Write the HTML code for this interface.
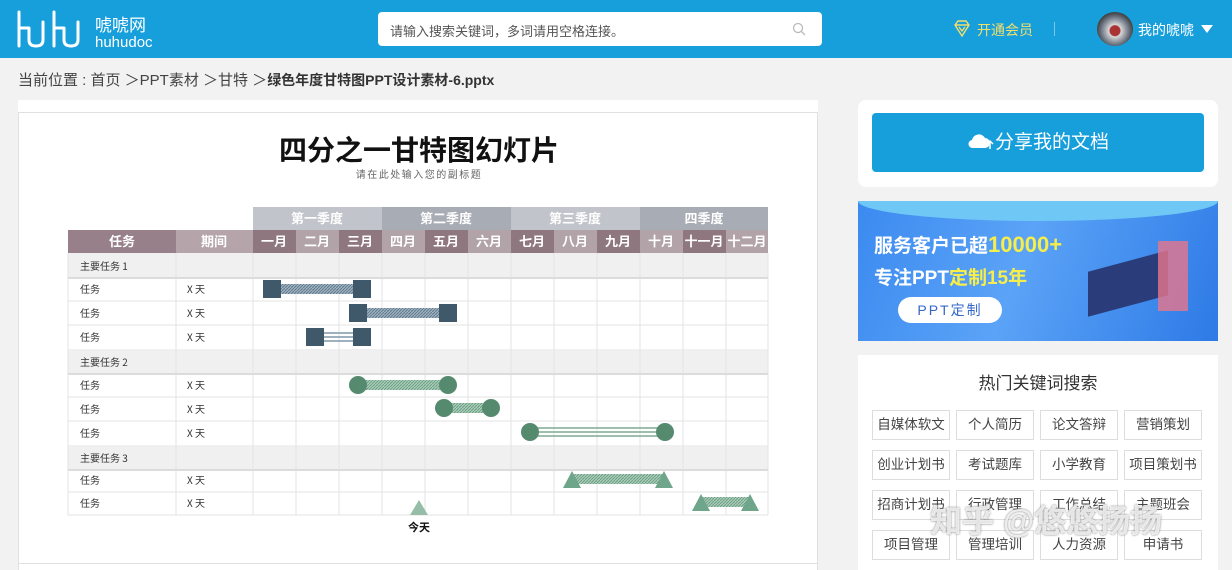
<!DOCTYPE html>
<html><head><meta charset="utf-8">
<style>
*{margin:0;padding:0;box-sizing:border-box}
body{width:1232px;height:570px;overflow:hidden;background:#f2f2f2;font-family:"Liberation Sans","Noto Sans CJK SC",sans-serif;position:relative}
.hdr{position:absolute;left:0;top:0;width:1232px;height:58px;background:#179fdc}
.abs{position:absolute}
.search{left:378px;top:12px;width:444px;height:34px;background:#fff;border-radius:4px;font-size:13px;color:#555;padding:9px 0 0 12px}
.crumb{left:18px;top:69px;font-size:15px;color:#444;white-space:nowrap}
.panel{background:#fff}
.btn{left:872px;top:113px;width:332px;height:59px;background:#179fdc;border-radius:4px;color:#fff;font-size:19px;text-align:center;line-height:59px}
.tag{position:absolute;width:78px;height:30px;border:1px solid #ddd;font-size:13.5px;color:#444;text-align:center;line-height:28px;background:#fff}
</style></head><body>
<div class="hdr"></div>
<svg class="abs" style="left:0;top:0" width="170" height="58">
<g fill="none" stroke="#fff" stroke-width="3" stroke-linecap="round" stroke-linejoin="round">
<path d="M19 12V46M19 28H29V40Q29 46 36 46Q43 46 43 40V22"/>
<path d="M54 12V46M54 28H64V40Q64 46 71 46Q78 46 78 40V22"/>
</g>
<text x="95" y="31" fill="#fff" font-size="17" font-family="Noto Sans CJK SC,sans-serif">唬唬网</text>
<text x="95" y="47" fill="#fff" font-size="15" font-family="Liberation Sans,sans-serif">huhudoc</text>
</svg>
<div class="abs search">请输入搜索关键词，多词请用空格连接。</div>
<svg class="abs" style="left:792px;top:22px" width="14" height="14"><circle cx="6" cy="6" r="4.5" fill="none" stroke="#bbb" stroke-width="1.3"/><path d="M9.5 9.5L13 13" stroke="#bbb" stroke-width="1.3"/></svg>
<svg class="abs" style="left:952px;top:20px" width="20" height="18"><path d="M3 5L6 1H14L17 5L10 16Z M3 5H17 M7 7L10 11L13 7" fill="none" stroke="#f3df6a" stroke-width="1.4"/></svg>
<div class="abs" style="left:977px;top:20px;font-size:14px;color:#f3df6a">开通会员</div>
<div class="abs" style="left:1054px;top:22px;width:1px;height:14px;background:#7cc6ea"></div>
<div class="abs" style="left:1097px;top:12px;width:36px;height:34px;border-radius:50%;background:radial-gradient(circle at 50% 55%,#a33 0 5px,#d8d8d8 6px,#6a7380 14px,#444 18px)"></div>
<div class="abs" style="left:1138px;top:20px;font-size:14px;color:#fff">我的唬唬</div>
<svg class="abs" style="left:1201px;top:25px" width="12" height="9"><path d="M0 0H12L6 8Z" fill="#fff"/></svg>

<div class="abs crumb">当前位置 : 首页 ＞PPT素材 ＞甘特 ＞<b style="font-size:14px;color:#333">绿色年度甘特图PPT设计素材-6.pptx</b></div>

<div class="abs panel" style="left:18px;top:100px;width:800px;height:470px"></div>
<div class="abs" style="left:18px;top:112px;width:800px;height:1px;background:#e0e0e0"></div>
<div class="abs" style="left:817px;top:112px;width:1px;height:458px;background:#e0e0e0"></div>
<div class="abs" style="left:18px;top:112px;width:1px;height:458px;background:#e0e0e0"></div>
<div class="abs" style="left:18px;top:563px;width:800px;height:1px;background:#e0e0e0"></div>

<svg class="abs" style="left:0;top:0" width="820" height="570" font-family="Noto Sans CJK SC,sans-serif">
<defs>
<pattern id="hb" width="3" height="3" patternUnits="userSpaceOnUse"><rect width="3" height="3" fill="#9fb3c2"/><path d="M0 3L3 0" stroke="#5f7a8c" stroke-width="1"/></pattern>
<pattern id="hg" width="3" height="3" patternUnits="userSpaceOnUse"><rect width="3" height="3" fill="#a9cdb9"/><path d="M0 3L3 0" stroke="#6d9f84" stroke-width="1"/></pattern>
</defs>
<text x="419" y="160" text-anchor="middle" font-size="28" font-weight="bold" fill="#111">四分之一甘特图幻灯片</text>
<text x="419" y="178" text-anchor="middle" font-size="10" fill="#666" letter-spacing="1.5">请在此处输入您的副标题</text>
<rect x="253" y="207" width="129" height="23" fill="#c1c4cb"/>
<rect x="382" y="207" width="129" height="23" fill="#a8acb4"/>
<rect x="511" y="207" width="129" height="23" fill="#c1c4cb"/>
<rect x="640" y="207" width="128" height="23" fill="#a8acb4"/>
<g fill="#fff" font-size="13" font-weight="bold" text-anchor="middle">
<text x="317" y="223">第一季度</text><text x="446" y="223">第二季度</text><text x="575" y="223">第三季度</text><text x="704" y="223">四季度</text></g>
<rect x="68" y="230" width="108" height="23" fill="#98808a"/>
<rect x="176" y="230" width="77" height="23" fill="#b5a5ab"/>
<g>
<rect x="253" y="230" width="43" height="23" fill="#8f777f"/><rect x="296" y="230" width="43" height="23" fill="#b2a3a8"/><rect x="339" y="230" width="43" height="23" fill="#8f777f"/>
<rect x="382" y="230" width="43" height="23" fill="#b2a3a8"/><rect x="425" y="230" width="43" height="23" fill="#8f777f"/><rect x="468" y="230" width="43" height="23" fill="#b2a3a8"/>
<rect x="511" y="230" width="43" height="23" fill="#8f777f"/><rect x="554" y="230" width="43" height="23" fill="#b2a3a8"/><rect x="597" y="230" width="43" height="23" fill="#8f777f"/>
<rect x="640" y="230" width="43" height="23" fill="#b2a3a8"/><rect x="683" y="230" width="43" height="23" fill="#8f777f"/><rect x="726" y="230" width="42" height="23" fill="#b2a3a8"/>
</g>
<g fill="#fff" font-size="13" font-weight="bold" text-anchor="middle">
<text x="122" y="246">任务</text><text x="214" y="246">期间</text>
<text x="274" y="246">一月</text><text x="317" y="246">二月</text><text x="360" y="246">三月</text><text x="403" y="246">四月</text><text x="446" y="246">五月</text><text x="489" y="246">六月</text><text x="532" y="246">七月</text><text x="575" y="246">八月</text><text x="618" y="246">九月</text><text x="661" y="246">十月</text><text x="704" y="246">十一月</text><text x="747" y="246">十二月</text></g>
<rect x="68" y="253" width="700" height="24" fill="#f0f0f0"/>
<rect x="68" y="349" width="700" height="24" fill="#f0f0f0"/>
<rect x="68" y="445" width="700" height="24" fill="#f0f0f0"/>
<g stroke="#e3e3e3" stroke-width="1">
<path d="M68 301H768M68 325H768M68 397H768M68 421H768M68 492H768M68 515H768"/>
<path d="M68 253V515M176 253V515M253 253V515M296 253V515M339 253V515M382 253V515M425 253V515M468 253V515M511 253V515M554 253V515M597 253V515M640 253V515M683 253V515M726 253V515M768 253V515"/>
</g>
<g stroke="#dcdcdc" stroke-width="2"><path d="M68 278H768M68 374H768M68 470H768"/></g>
<g font-size="10" fill="#333">
<text x="80" y="270">主要任务 1</text><text x="80" y="366">主要任务 2</text><text x="80" y="462">主要任务 3</text>
<text x="80" y="293">任务</text><text x="80" y="317">任务</text><text x="80" y="341">任务</text>
<text x="80" y="389">任务</text><text x="80" y="413">任务</text><text x="80" y="437">任务</text>
<text x="80" y="484">任务</text><text x="80" y="507">任务</text>
<text x="187" y="293">X 天</text><text x="187" y="317">X 天</text><text x="187" y="341">X 天</text>
<text x="187" y="389">X 天</text><text x="187" y="413">X 天</text><text x="187" y="437">X 天</text>
<text x="187" y="484">X 天</text><text x="187" y="507">X 天</text>
</g>
<rect x="275" y="284" width="84" height="10" fill="url(#hb)"/>
<rect x="263" y="280" width="18" height="18" fill="#3f596b"/><rect x="353" y="280" width="18" height="18" fill="#3f596b"/>
<rect x="361" y="308" width="84" height="10" fill="url(#hb)"/>
<rect x="349" y="304" width="18" height="18" fill="#3f596b"/><rect x="439" y="304" width="18" height="18" fill="#3f596b"/>
<g stroke="#7f97a8" stroke-width="1.5"><path d="M320 333H356M320 337H356M320 341H356"/></g>
<rect x="306" y="328" width="18" height="18" fill="#3f596b"/><rect x="353" y="328" width="18" height="18" fill="#3f596b"/>
<rect x="358" y="380" width="90" height="10" fill="url(#hg)"/>
<circle cx="358" cy="385" r="9" fill="#568a6e"/><circle cx="448" cy="385" r="9" fill="#568a6e"/>
<rect x="444" y="403" width="47" height="10" fill="url(#hg)"/>
<circle cx="444" cy="408" r="9" fill="#568a6e"/><circle cx="491" cy="408" r="9" fill="#568a6e"/>
<g stroke="#7eaa92" stroke-width="1.5"><path d="M530 428H665M530 432H665M530 436H665"/></g>
<circle cx="530" cy="432" r="9" fill="#568a6e"/><circle cx="665" cy="432" r="9" fill="#568a6e"/>
<rect x="572" y="474" width="92" height="10" fill="url(#hg)"/>
<path d="M563 488L572 471L581 488Z M655 488L664 471L673 488Z" fill="#6fa58a"/>
<rect x="701" y="497" width="49" height="10" fill="url(#hg)"/>
<path d="M692 511L701 494L710 511Z M741 511L750 494L759 511Z" fill="#6fa58a"/>
<path d="M410 515L419 500L428 515Z" fill="#96bda8"/>
<text x="419" y="531" text-anchor="middle" font-size="11" font-weight="bold" fill="#111">今天</text>
</svg>

<div class="abs panel" style="left:858px;top:100px;width:360px;height:87px;border-radius:8px"></div>
<div class="abs btn"><svg width="28" height="20" style="vertical-align:-3px"><path d="M6 17H18A5 5 0 0 0 18 7A7 7 0 0 0 5 9A4 4 0 0 0 6 17Z" fill="#fff"/><path d="M23 18V10M20 13L23 10L26 13" stroke="#fff" stroke-width="1.5" fill="none"/></svg>分享我的文档</div>
<div class="abs" style="left:858px;top:201px;width:360px;height:140px;background:linear-gradient(110deg,#3b8af0,#5ba3f7 45%,#2d7ae6);overflow:hidden">
<div class="abs" style="left:0;top:-20px;width:360px;height:40px;border-radius:50%;background:#6ec7f5"></div>
<div class="abs" style="left:16px;top:30px;font-size:19px;font-weight:bold;color:#fff">服务客户已超<span style="color:#f6ee4a;font-size:22px">10000+</span></div>
<div class="abs" style="left:16px;top:62px;font-size:19px;font-weight:bold;color:#fff">专注PPT<span style="color:#f6ee4a">定制15年</span></div>
<div class="abs" style="left:40px;top:96px;width:104px;height:26px;border-radius:13px;background:#fff;color:#3367c9;font-size:14px;text-align:center;line-height:26px;letter-spacing:2px">PPT定制</div>
<div class="abs" style="left:230px;top:60px;width:80px;height:45px;background:#2b3c7a;transform:skewY(-15deg)"></div>
<div class="abs" style="left:300px;top:40px;width:30px;height:70px;background:#e9758b;opacity:.8"></div>
</div>
<div class="abs panel" style="left:858px;top:355px;width:360px;height:215px"></div>
<div class="abs" style="left:858px;top:369px;width:360px;text-align:center;font-size:17px;color:#333">热门关键词搜索</div>
<div class="tag" style="left:872px;top:410px">自媒体软文</div><div class="tag" style="left:956px;top:410px">个人简历</div><div class="tag" style="left:1040px;top:410px">论文答辩</div><div class="tag" style="left:1124px;top:410px">营销策划</div>
<div class="tag" style="left:872px;top:450px">创业计划书</div><div class="tag" style="left:956px;top:450px">考试题库</div><div class="tag" style="left:1040px;top:450px">小学教育</div><div class="tag" style="left:1124px;top:450px">项目策划书</div>
<div class="tag" style="left:872px;top:490px">招商计划书</div><div class="tag" style="left:956px;top:490px">行政管理</div><div class="tag" style="left:1040px;top:490px">工作总结</div><div class="tag" style="left:1124px;top:490px">主题班会</div>
<div class="tag" style="left:872px;top:530px">项目管理</div><div class="tag" style="left:956px;top:530px">管理培训</div><div class="tag" style="left:1040px;top:530px">人力资源</div><div class="tag" style="left:1124px;top:530px">申请书</div>
<div class="abs" style="left:930px;top:496px;font-size:32px;color:rgba(255,255,255,.8);text-shadow:0 0 2px #777;font-weight:bold">知乎 @悠悠扬扬</div>
</body></html>
